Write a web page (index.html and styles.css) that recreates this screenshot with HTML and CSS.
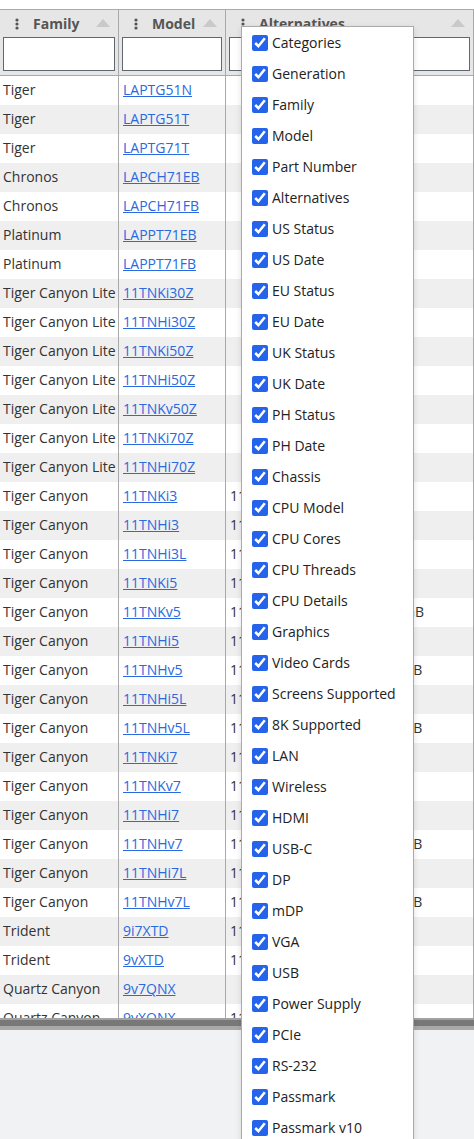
FILE: index.html
```html
<!DOCTYPE html>
<html lang="en">
<head>
<meta charset="utf-8">
<title>Models</title>
<link rel="stylesheet" href="styles.css">
</head>
<body>
<div class="page">
  <div class="grid">
    <div class="head">
      <div class="hcell">
        <div class="htitle">
          <svg class="kebab" width="4" height="12" viewBox="0 0 4 12"><circle cx="2" cy="2" r="1.6"/><circle cx="2" cy="6" r="1.6"/><circle cx="2" cy="10" r="1.6"/></svg>
          <span class="hlabel">Family</span>
          <svg class="sort" width="14" height="8" viewBox="0 0 14 8"><path d="M7 0 L14 8 L0 8 Z"/></svg>
        </div>
        <input class="filter" type="text">
      </div>
      <div class="hcell">
        <div class="htitle">
          <svg class="kebab" width="4" height="12" viewBox="0 0 4 12"><circle cx="2" cy="2" r="1.6"/><circle cx="2" cy="6" r="1.6"/><circle cx="2" cy="10" r="1.6"/></svg>
          <span class="hlabel">Model</span>
          <svg class="sort" width="14" height="8" viewBox="0 0 14 8"><path d="M7 0 L14 8 L0 8 Z"/></svg>
        </div>
        <input class="filter" type="text">
      </div>
      <div class="hcell">
        <div class="htitle">
          <svg class="kebab" width="4" height="12" viewBox="0 0 4 12"><circle cx="2" cy="2" r="1.6"/><circle cx="2" cy="6" r="1.6"/><circle cx="2" cy="10" r="1.6"/></svg>
          <span class="hlabel">Alternatives</span>
          <svg class="sort" width="14" height="8" viewBox="0 0 14 8"><path d="M7 0 L14 8 L0 8 Z"/></svg>
        </div>
        <input class="filter" type="text">
      </div>
    </div>
    <div class="body">
      <div class="row"><div class="cell">Tiger</div><div class="cell"><a href="#">LAPTG51N</a></div><div class="cell"></div></div>
      <div class="row"><div class="cell">Tiger</div><div class="cell"><a href="#">LAPTG51T</a></div><div class="cell"></div></div>
      <div class="row"><div class="cell">Tiger</div><div class="cell"><a href="#">LAPTG71T</a></div><div class="cell"></div></div>
      <div class="row"><div class="cell">Chronos</div><div class="cell"><a href="#">LAPCH71EB</a></div><div class="cell"></div></div>
      <div class="row"><div class="cell">Chronos</div><div class="cell"><a href="#">LAPCH71FB</a></div><div class="cell"></div></div>
      <div class="row"><div class="cell">Platinum</div><div class="cell"><a href="#">LAPPT71EB</a></div><div class="cell"></div></div>
      <div class="row"><div class="cell">Platinum</div><div class="cell"><a href="#">LAPPT71FB</a></div><div class="cell"></div></div>
      <div class="row"><div class="cell">Tiger Canyon Lite</div><div class="cell"><a href="#">11TNKi30Z</a></div><div class="cell"></div></div>
      <div class="row"><div class="cell">Tiger Canyon Lite</div><div class="cell"><a href="#">11TNHi30Z</a></div><div class="cell"></div></div>
      <div class="row"><div class="cell">Tiger Canyon Lite</div><div class="cell"><a href="#">11TNKi50Z</a></div><div class="cell"></div></div>
      <div class="row"><div class="cell">Tiger Canyon Lite</div><div class="cell"><a href="#">11TNHi50Z</a></div><div class="cell"></div></div>
      <div class="row"><div class="cell">Tiger Canyon Lite</div><div class="cell"><a href="#">11TNKv50Z</a></div><div class="cell"></div></div>
      <div class="row"><div class="cell">Tiger Canyon Lite</div><div class="cell"><a href="#">11TNKi70Z</a></div><div class="cell"></div></div>
      <div class="row"><div class="cell">Tiger Canyon Lite</div><div class="cell"><a href="#">11TNHi70Z</a></div><div class="cell"></div></div>
      <div class="row"><div class="cell">Tiger Canyon</div><div class="cell"><a href="#">11TNKi3</a></div><div class="cell">11TNKi30Z</div></div>
      <div class="row"><div class="cell">Tiger Canyon</div><div class="cell"><a href="#">11TNHi3</a></div><div class="cell">11TNHi30Z</div></div>
      <div class="row"><div class="cell">Tiger Canyon</div><div class="cell"><a href="#">11TNHi3L</a></div><div class="cell">11TNHi30Z</div></div>
      <div class="row"><div class="cell">Tiger Canyon</div><div class="cell"><a href="#">11TNKi5</a></div><div class="cell">11TNKi50Z</div></div>
      <div class="row"><div class="cell">Tiger Canyon</div><div class="cell"><a href="#">11TNKv5</a></div><div class="cell">11TNKv50Z, 11TNKi50Z, 16GB</div></div>
      <div class="row"><div class="cell">Tiger Canyon</div><div class="cell"><a href="#">11TNHi5</a></div><div class="cell">11TNHi50Z</div></div>
      <div class="row"><div class="cell">Tiger Canyon</div><div class="cell"><a href="#">11TNHv5</a></div><div class="cell">11TNHi50Z, 11TNKi50Z, 16GB</div></div>
      <div class="row"><div class="cell">Tiger Canyon</div><div class="cell"><a href="#">11TNHi5L</a></div><div class="cell">11TNHi50Z</div></div>
      <div class="row"><div class="cell">Tiger Canyon</div><div class="cell"><a href="#">11TNHv5L</a></div><div class="cell">11TNHi50Z, 11TNKi50Z, 16GB</div></div>
      <div class="row"><div class="cell">Tiger Canyon</div><div class="cell"><a href="#">11TNKi7</a></div><div class="cell">11TNKi70Z</div></div>
      <div class="row"><div class="cell">Tiger Canyon</div><div class="cell"><a href="#">11TNKv7</a></div><div class="cell">11TNKi70Z, 11TNHi70Z</div></div>
      <div class="row"><div class="cell">Tiger Canyon</div><div class="cell"><a href="#">11TNHi7</a></div><div class="cell">11TNHi70Z</div></div>
      <div class="row"><div class="cell">Tiger Canyon</div><div class="cell"><a href="#">11TNHv7</a></div><div class="cell">11TNHi70Z, 11TNKi70Z, 16GB</div></div>
      <div class="row"><div class="cell">Tiger Canyon</div><div class="cell"><a href="#">11TNHi7L</a></div><div class="cell">11TNHi70Z</div></div>
      <div class="row"><div class="cell">Tiger Canyon</div><div class="cell"><a href="#">11TNHv7L</a></div><div class="cell">11TNHi70Z, 11TNKi70Z, 16GB</div></div>
      <div class="row"><div class="cell">Trident</div><div class="cell"><a href="#">9i7XTD</a></div><div class="cell">11TNKi7</div></div>
      <div class="row"><div class="cell">Trident</div><div class="cell"><a href="#">9vXTD</a></div><div class="cell">11TNKv7</div></div>
      <div class="row"><div class="cell">Quartz Canyon</div><div class="cell"><a href="#">9v7QNX</a></div><div class="cell"></div></div>
      <div class="row"><div class="cell">Quartz Canyon</div><div class="cell"><a href="#">9vXQNX</a></div><div class="cell">11TNKv7</div></div>
    </div>
    <div class="hscroll"></div>
  </div>

  <ul class="menu">
    <li class="opt"><input type="checkbox" checked><span>Categories</span></li>
    <li class="opt"><input type="checkbox" checked><span>Generation</span></li>
    <li class="opt"><input type="checkbox" checked><span>Family</span></li>
    <li class="opt"><input type="checkbox" checked><span>Model</span></li>
    <li class="opt"><input type="checkbox" checked><span>Part Number</span></li>
    <li class="opt"><input type="checkbox" checked><span>Alternatives</span></li>
    <li class="opt"><input type="checkbox" checked><span>US Status</span></li>
    <li class="opt"><input type="checkbox" checked><span>US Date</span></li>
    <li class="opt"><input type="checkbox" checked><span>EU Status</span></li>
    <li class="opt"><input type="checkbox" checked><span>EU Date</span></li>
    <li class="opt"><input type="checkbox" checked><span>UK Status</span></li>
    <li class="opt"><input type="checkbox" checked><span>UK Date</span></li>
    <li class="opt"><input type="checkbox" checked><span>PH Status</span></li>
    <li class="opt"><input type="checkbox" checked><span>PH Date</span></li>
    <li class="opt"><input type="checkbox" checked><span>Chassis</span></li>
    <li class="opt"><input type="checkbox" checked><span>CPU Model</span></li>
    <li class="opt"><input type="checkbox" checked><span>CPU Cores</span></li>
    <li class="opt"><input type="checkbox" checked><span>CPU Threads</span></li>
    <li class="opt"><input type="checkbox" checked><span>CPU Details</span></li>
    <li class="opt"><input type="checkbox" checked><span>Graphics</span></li>
    <li class="opt"><input type="checkbox" checked><span>Video Cards</span></li>
    <li class="opt"><input type="checkbox" checked><span>Screens Supported</span></li>
    <li class="opt"><input type="checkbox" checked><span>8K Supported</span></li>
    <li class="opt"><input type="checkbox" checked><span>LAN</span></li>
    <li class="opt"><input type="checkbox" checked><span>Wireless</span></li>
    <li class="opt"><input type="checkbox" checked><span>HDMI</span></li>
    <li class="opt"><input type="checkbox" checked><span>USB-C</span></li>
    <li class="opt"><input type="checkbox" checked><span>DP</span></li>
    <li class="opt"><input type="checkbox" checked><span>mDP</span></li>
    <li class="opt"><input type="checkbox" checked><span>VGA</span></li>
    <li class="opt"><input type="checkbox" checked><span>USB</span></li>
    <li class="opt"><input type="checkbox" checked><span>Power Supply</span></li>
    <li class="opt"><input type="checkbox" checked><span>PCIe</span></li>
    <li class="opt"><input type="checkbox" checked><span>RS-232</span></li>
    <li class="opt"><input type="checkbox" checked><span>Passmark</span></li>
    <li class="opt"><input type="checkbox" checked><span>Passmark v10</span></li>
  </ul>
</div>
</body>
</html>
```

FILE: styles.css
```css
* { box-sizing: border-box; }

html, body {
  margin: 0;
  padding: 0;
  background: #f1f2f4;
  font-family: "Open Sans", "Liberation Sans", sans-serif;
  font-size: 14px;
  color: #333;
}

.page {
  position: relative;
  width: 474px;
  height: 1139px;
  overflow: hidden;
}

.grid {
  background: #fff;
  padding-top: 9px;
}

.head {
  display: grid;
  grid-template-columns: 119px 107px 248px;
  background: #e6e6e6;
  border-top: 1px solid #a9a9a9;
  border-bottom: 1px solid #a9a9a9;
}

.hcell {
  border-right: 1px solid #a9a9a9;
  padding: 0 3px 4px 3px;
  display: flex;
  flex-direction: column;
}

.htitle {
  height: 27px;
  display: flex;
  align-items: center;
  padding-left: 12px;
  padding-right: 5px;
}

.kebab {
  fill: #555;
  flex: none;
}

.hlabel {
  font-weight: 700;
  color: #555;
  margin-left: 14px;
  flex: 1;
  white-space: nowrap;
}

.sort {
  fill: #c9c9c9;
  flex: none;
  margin-top: -2px;
}

.filter {
  height: 34px;
  width: 100%;
  margin: 0;
  border: 1px solid #5f6773;
  border-radius: 0;
  background: #fff;
  font: inherit;
  padding: 0 4px;
}

.body {
  height: 942px;
  overflow: hidden;
}

.row {
  display: grid;
  grid-template-columns: 119px 107px 248px;
  height: 29px;
  background: #fff;
}

.row:nth-child(even) {
  background: #efefef;
}

.cell {
  border-right: 1px solid #a9a9a9;
  padding: 0 4px;
  line-height: 28px;
  white-space: nowrap;
  overflow: hidden;
  color: #333;
}

.cell:first-child {
  padding-left: 3px;
}

.cell a {
  color: #2a69e0;
  text-decoration: underline;
}

.hscroll {
  height: 12px;
  background: #787878;
  border-top: 2px solid #a2a2a2;
  border-bottom: 4px solid #a9a9a9;
}

.menu {
  position: absolute;
  left: 241px;
  top: 26px;
  width: 173px;
  margin: 0;
  padding: 0;
  list-style: none;
  background: #fff;
  border: 1px solid #aaa;
  box-shadow: 0 2px 6px rgba(0, 0, 0, 0.12);
  height: 1200px;
}

.opt {
  height: 31px;
  display: flex;
  align-items: center;
  padding-left: 10px;
  color: #222;
  white-space: nowrap;
}

.opt input {
  width: 16px;
  height: 16px;
  margin: 0 4px 0 0;
  accent-color: #2563eb;
  flex: none;
}
```
